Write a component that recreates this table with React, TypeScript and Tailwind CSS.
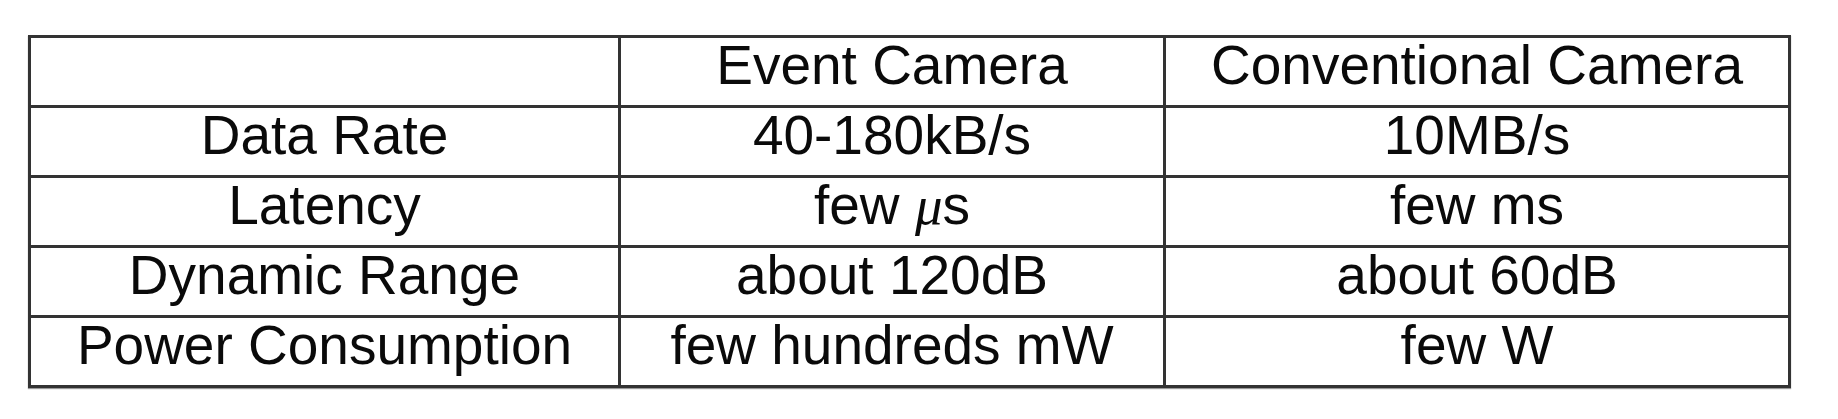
import { Fragment } from "react";

const rows: [string, React.ReactNode, string][] = [
  ["Data Rate", "40-180kB/s", "10MB/s"],
  [
    "Latency",
    <>
      few <span className="font-['Liberation_Serif',serif] italic">μ</span>s
    </>,
    "few ms",
  ],
  ["Dynamic Range", "about 120dB", "about 60dB"],
  ["Power Consumption", "few hundreds mW", "few W"],
];

function Cell({ children }: { children?: React.ReactNode }) {
  return (
    <div className="flex h-[67px] items-start justify-center bg-white text-center leading-none">
      <span>{children}</span>
    </div>
  );
}

export default function App() {
  return (
    <div className="h-[419px] w-[1838px] bg-white pl-[28px] pt-[35px] font-['Liberation_Sans',Arial,sans-serif] text-[55px] text-[#0a0a0a]">
      <div className="grid w-[1763px] grid-cols-[587px_542px_622px] gap-[3px] bg-[#333] p-[3px] shadow-[0_1px_1px_#999]">
        <Cell />
        <Cell>Event Camera</Cell>
        <Cell>Conventional Camera</Cell>
        {rows.map(([label, event, conventional]) => (
          <Fragment key={label}>
            <Cell>{label}</Cell>
            <Cell>{event}</Cell>
            <Cell>{conventional}</Cell>
          </Fragment>
        ))}
      </div>
    </div>
  );
}
